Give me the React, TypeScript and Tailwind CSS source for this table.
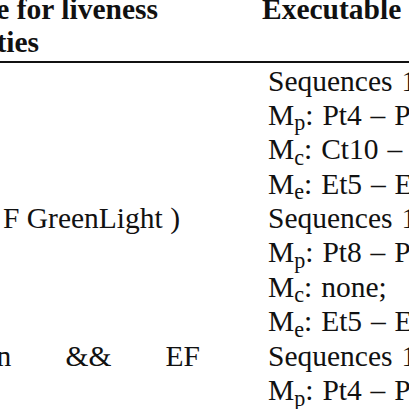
import React from "react";

const serif = { fontFamily: '"Liberation Serif", "Times New Roman", serif' };

function Line({ children }: { children?: React.ReactNode }) {
  return <div className="h-[34.4px] leading-[34.4px] whitespace-nowrap">{children}</div>;
}

function M({ s, children }: { s: string; children: React.ReactNode }) {
  return (
    <Line>
      M<sub>{s}</sub>: {children}
    </Line>
  );
}

export default function App() {
  return (
    <div
      className="w-[409px] h-[409px] overflow-hidden bg-white text-[#111]"
      style={serif}
    >
      {/* header */}
      <div className="flex mt-[-7px] text-[29.5px] leading-[33px] font-bold">
        <div className="w-[262px] shrink-0">
          <div className="flex justify-end w-[158px] whitespace-nowrap">Rule for liveness</div>
          <div className="flex justify-end w-[39px] whitespace-nowrap">properties</div>
        </div>
        <div className="whitespace-nowrap">Executable sequences</div>
      </div>
      <div className="mt-[2px] h-[2px] w-full bg-[#111]" />

      {/* body */}
      <div className="pt-[0.5px] text-[29.5px]">
        <div className="flex">
          <div className="w-[268px] shrink-0" />
          <div className="[word-spacing:1.5px]">
            <Line>Sequences 1–3:</Line>
            <M s="p">Pt4 – Pt5 – Pt6;</M>
            <M s="c">Ct10 – Ct11;</M>
            <M s="e">Et5 – Et6;</M>
          </div>
        </div>

        <div className="flex">
          <div className="w-[268px] shrink-0">
            <Line>
              <span className="ml-[3px]">F GreenLight )</span>
            </Line>
          </div>
          <div className="[word-spacing:1.5px]">
            <Line>Sequences 1–2:</Line>
            <M s="p">Pt8 – Pt9;</M>
            <M s="c">none;</M>
            <M s="e">Et5 – Et6;</M>
          </div>
        </div>

        <div className="flex">
          <div className="w-[268px] shrink-0">
            <div className="flex justify-between w-[200px] h-[34.4px] leading-[34.4px] whitespace-nowrap">
              <span className="ml-[-69px]">Button</span>
              <span>&amp;&amp;</span>
              <span>EF</span>
            </div>
          </div>
          <div className="[word-spacing:1.5px]">
            <Line>Sequences 1–4:</Line>
            <M s="p">Pt4 – Pt5;</M>
            <M s="c">Ct2 – Ct3;</M>
            <M s="e">Et1 – Et2;</M>
          </div>
        </div>
      </div>
    </div>
  );
}
